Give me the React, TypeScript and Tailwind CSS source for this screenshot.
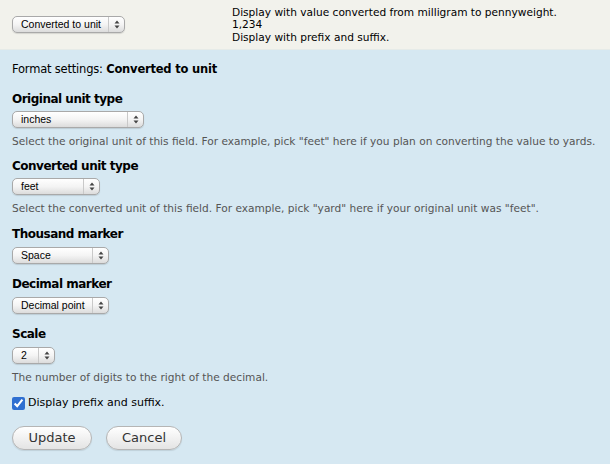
import React from 'react';

const Select: React.FC<{ value: string; width: number; className?: string }> = ({ value, width, className = '' }) => (
  <div
    className={`flex h-[17px] items-stretch rounded-[5px] border border-[#a9a9a9] bg-gradient-to-b from-white via-[#f4f4f4] to-[#dcdcdc] shadow-[0_1px_1px_rgba(0,0,0,0.12)] ${className}`}
    style={{ width }}
  >
    <span className="flex flex-1 items-center overflow-hidden whitespace-nowrap pl-[8px] font-['Liberation_Sans',sans-serif] text-[10.5px] leading-none text-black">{value}</span>
    <span className="flex w-[16px] items-center justify-center border-l border-[#c9c9c9]">
      <svg width="6" height="9" viewBox="0 0 6 9">
        <path d="M3 0.5 L5.5 3.5 H0.5 Z M3 8.5 L5.5 5.5 H0.5 Z" fill="#444" />
      </svg>
    </span>
  </div>
);

const Label: React.FC<{ children: React.ReactNode; className?: string }> = ({ children, className = '' }) => (
  <div className={`text-[12px] font-bold leading-4 tracking-[-0.5px] text-black ${className}`}>{children}</div>
);

const Desc: React.FC<{ children: React.ReactNode }> = ({ children }) => (
  <div className="mt-[6px] whitespace-nowrap text-[10.6px] leading-[14px] text-[#555]">{children}</div>
);

const App: React.FC = () => {
  return (
    <div className="h-[464px] w-[610px] overflow-hidden bg-[#d6e8f2] font-['DejaVu_Sans',sans-serif]">
      <div className="flex h-[50px] items-center border-b border-[#e6ebe8] bg-[#f2f2ec]">
        <div className="w-[232px] pl-3">
          <Select value="Converted to unit" width={113} />
        </div>
        <div className="text-[10.6px] leading-[12.5px] text-black">
          <div>Display with value converted from milligram to pennyweight.</div>
          <div>1,234</div>
          <div>Display with prefix and suffix.</div>
        </div>
      </div>

      <div className="px-3 pt-[11px]">
        <div className="text-[11.5px] leading-4 tracking-[-0.2px] text-black">
          Format settings: <span className="font-bold">Converted to unit</span>
        </div>

        <Label className="mt-[14px]">Original unit type</Label>
        <Select value="inches" width={132} className="mt-1" />
        <Desc>Select the original unit of this field. For example, pick "feet" here if you plan on converting the value to yards.</Desc>

        <Label className="mt-[10px]">Converted unit type</Label>
        <Select value="feet" width={88} className="mt-1" />
        <Desc>Select the converted unit of this field. For example, pick "yard" here if your original unit was "feet".</Desc>

        <Label className="mt-[11px]">Thousand marker</Label>
        <Select value="Space" width={97} className="mt-[5px]" />

        <Label className="mt-[12px]">Decimal marker</Label>
        <Select value="Decimal point" width={97} className="mt-[5px]" />

        <Label className="mt-[12px]">Scale</Label>
        <Select value="2" width={43} className="mt-[5px]" />
        <Desc>The number of digits to the right of the decimal.</Desc>

        <label className="mt-[11px] flex h-4 items-center gap-[3px] text-[11px] text-black">
          <input type="checkbox" defaultChecked className="m-0 h-[13px] w-[13px] accent-[#2f6fd1]" />
          Display prefix and suffix.
        </label>

        <div className="mt-[15px] flex gap-[14px]">
          <button className="h-6 w-[80px] rounded-full border border-[#b5b5b5] bg-gradient-to-b from-white to-[#e4e4e4] text-[13px] text-[#333] shadow-[0_1px_1px_rgba(0,0,0,0.1)]">
            Update
          </button>
          <button className="h-6 w-[76px] rounded-full border border-[#b5b5b5] bg-gradient-to-b from-white to-[#e4e4e4] text-[13px] text-[#333] shadow-[0_1px_1px_rgba(0,0,0,0.1)]">
            Cancel
          </button>
        </div>
      </div>
    </div>
  );
};

export default App;
